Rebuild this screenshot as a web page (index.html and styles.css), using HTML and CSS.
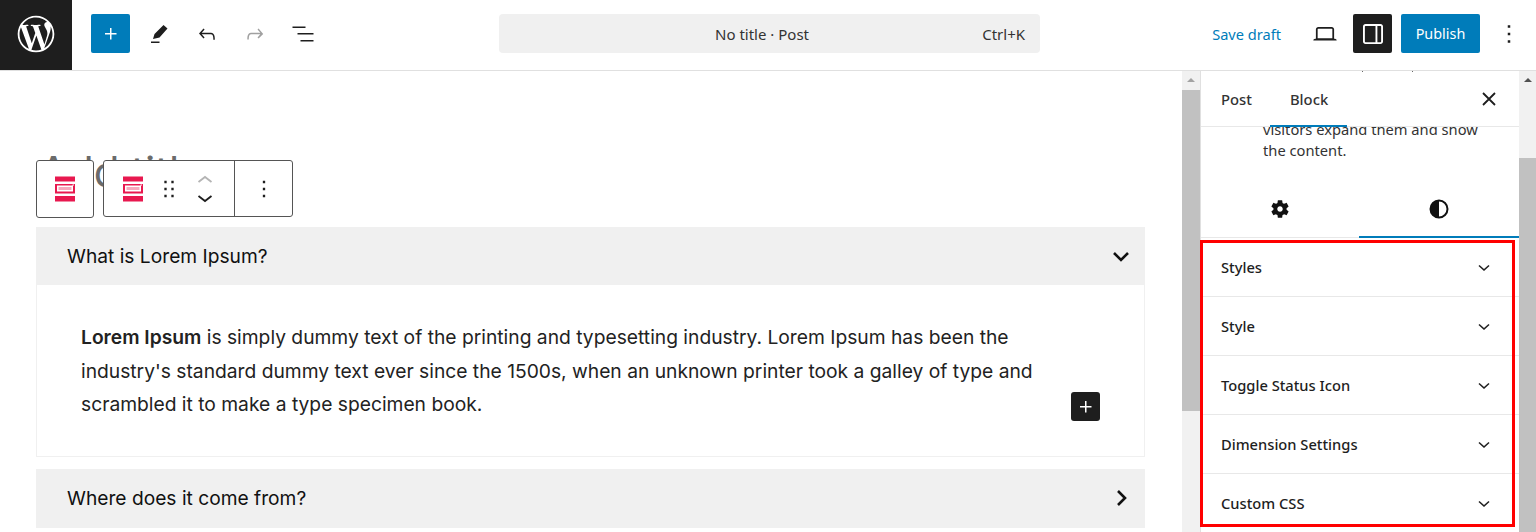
FILE: index.html
```html
<!DOCTYPE html>
<html lang="en">
<head>
    <meta charset="UTF-8">
    <title>Edit Post</title>
    <link rel="stylesheet" href="styles.css">
</head>
<body>
    <header class="topbar">
        <div class="wp-logo">
            <svg width="44" height="44" viewBox="0 0 24 24" fill="#fff"><path d="M12 2C6.500 2 2 6.500 2 12s4.500 10 10 10 10-4.500 10-10S17.500 2 12 2zM3 12c0-1.300.3-2.500.8-3.700l4.300 11.800C5 18.700 3 15.600 3 12zm9 9c-.9 0-1.700-.1-2.500-.4l2.700-7.800 2.700 7.600c0 0 0 .1.100.1-.9.300-1.900.5-3 .5zm1.200-13.200c.5 0 1-.1 1-.1.500-.1.400-.8-.1-.7 0 0-1.400.1-2.300.1-.8 0-2.300-.1-2.300-.1-.5 0-.5.700-.1.700 0 0 .5.100.9.100l1.300 3.700-1.900 5.600-3.100-9.300c.5 0 1-.1 1-.1.500-.1.400-.8-.1-.7 0 0-1.400.1-2.300.1h-.6C6.200 4.300 8.900 3 12 3c2.300 0 4.500.9 6.100 2.400h-.1c-.9 0-1.500.8-1.500 1.600 0 .7.400 1.300.9 2.100.4.600.8 1.400.8 2.600 0 .8-.3 1.700-.7 3l-.9 3-3.400-9.900zm3.300 12l2.800-7.900c.5-1.300.7-2.300.7-3.200 0-.3 0-.6-.1-.9.700 1.300 1.100 2.700 1.100 4.200 0 3.300-1.800 6.200-4.500 7.800z"/></svg>
        </div>
        <div class="tools">
            <button class="btn-add">
                <svg width="24" height="24" viewBox="0 0 24 24" fill="#fff"><path d="M11 12.500V17.500H12.500V12.500H17.500V11H12.500V6H11V11H6V12.500H11Z"/></svg>
            </button>
            <span class="tool">
                <svg width="24" height="24" viewBox="0 0 24 24" fill="#1e1e1e"><path d="M16.500 3L20.500 6.500 12.500 15.500 6 17 7.500 12zM4 19.500h8.500V21H4z"/></svg>
            </span>
            <span class="tool">
                <svg width="24" height="24" viewBox="0 0 24 24" fill="#1e1e1e"><path d="M18.300 11.700c-.6-.6-1.400-.9-2.300-.9H6.700l2.900-3.300-1.100-1-4.500 5L8.500 16.500l1.100-1-2.900-3.200H16c.5 0 .9.200 1.300.5 1 1 1 3.400 1 4.500v.5h1.500v-.5c0-1.500 0-4.300-1.500-5.600z"/></svg>
            </span>
            <span class="tool">
                <svg width="24" height="24" viewBox="0 0 24 24" fill="#a0a0a0"><path d="M15.600 6.500l-1.100 1 2.900 3.300H8c-.9 0-1.700.3-2.300.9-1.400 1.500-1.400 4.200-1.400 5.600v.2h1.500v-.3c0-1.100 0-3.500 1-4.500.3-.3.700-.5 1.300-.5h9.200L14.500 15.500l1.100 1.100 4.600-4.600-4.600-5.500z"/></svg>
            </span>
            <span class="tool">
                <svg width="24" height="24" viewBox="0 0 24 24" fill="#1e1e1e"><path d="M1.500 4.500h13V6h-13zM6.500 11h16v1.500h-16zM9.500 18h13v1.500h-13z"/></svg>
            </span>
        </div>
        <div class="command">
            <span class="command-title">No title · Post</span>
            <span class="command-key">Ctrl+K</span>
        </div>
        <div class="actions">
            <span class="save">Save draft</span>
            <svg class="laptop" width="28" height="28" viewBox="0 0 24 24" fill="#1e1e1e"><path d="M20.500 16h-.7V8c0-1.100-.9-2-2-2H6.200c-1.100 0-2 .9-2 2v8h-.7c-.8 0-1.500.7-1.500 1.500h20c0-.8-.7-1.500-1.500-1.500zM5.700 8c0-.3.200-.5.500-.5h11.600c.3 0 .5.200.5.500v7.600H5.700V8z"/></svg>
            <button class="btn-panel">
                <svg width="30" height="30" viewBox="0 0 24 24" fill="#fff"><path d="M18 4H6c-1.100 0-2 .9-2 2v12c0 1.100.9 2 2 2h12c1.100 0 2-.9 2-2V6c0-1.100-.9-2-2-2zM5.500 18V6c0-.3.200-.5.500-.5h8v13H6c-.3 0-.5-.2-.5-.5zm13 0c0 .3-.2.500-.5.500h-2.500v-13H18c.3 0 .5.200.5.500v12z"/></svg>
            </button>
            <button class="btn-publish">Publish</button>
            <svg class="kebab" width="30" height="30" viewBox="0 0 24 24" fill="#1e1e1e"><path d="M13 19h-2v-2h2v2zm0-6h-2v-2h2v2zm0-6h-2V5h2v2z"/></svg>
        </div>
    </header>

    <div class="workspace">
        <main class="editor">
            <div class="post-title">Add title</div>

            <div class="block-toolbar">
                <div class="tb-group tb-single">
                    <svg width="24" height="28" viewBox="0 0 24 28"><use href="#accordion"/></svg>
                </div>
                <div class="tb-group tb-main">
                    <div class="tb-cell">
                        <svg width="24" height="28" viewBox="0 0 24 28"><use href="#accordion"/></svg>
                        <svg width="28" height="28" viewBox="0 0 24 24" fill="#1e1e1e"><path d="M8 7h2V5H8v2zm0 6h2v-2H8v2zm0 6h2v-2H8v2zm6-14v2h2V5h-2zm0 8h2v-2h-2v2zm0 6h2v-2h-2v2z"/></svg>
                        <div class="movers">
                            <svg width="24" height="14" viewBox="0 0 24 14" fill="none" stroke="#b4b4b4" stroke-width="1.800"><path d="M5.500 10l6.500-5 6.500 5"/></svg>
                            <svg width="24" height="14" viewBox="0 0 24 14" fill="none" stroke="#1e1e1e" stroke-width="1.800"><path d="M5.500 4l6.500 5 6.500-5"/></svg>
                        </div>
                    </div>
                    <div class="tb-more">
                        <svg width="28" height="28" viewBox="0 0 24 24" fill="#1e1e1e"><path d="M13 19h-2v-2h2v2zm0-6h-2v-2h2v2zm0-6h-2V5h2v2z"/></svg>
                    </div>
                </div>
            </div>

            <section class="accordion">
                <div class="acc-head">
                    <span>What is Lorem Ipsum?</span>
                    <svg width="20" height="20" viewBox="0 0 20 20" fill="none" stroke="#111" stroke-width="2.600"><path d="M3 7l7 7 7-7"/></svg>
                </div>
                <div class="acc-body">
                    <p><strong>Lorem Ipsum</strong> is simply dummy text of the printing and typesetting industry. Lorem Ipsum has been the industry's standard dummy text ever since the 1500s, when an unknown printer took a galley of type and scrambled it to make a type specimen book.</p>
                    <span class="inserter">
                        <svg width="24" height="24" viewBox="0 0 24 24" fill="#fff"><path d="M11 12.500V17.500H12.500V12.500H17.500V11H12.500V6H11V11H6V12.500H11Z"/></svg>
                    </span>
                </div>
            </section>
            <section class="accordion">
                <div class="acc-head">
                    <span>Where does it come from?</span>
                    <svg class="chev-right" width="20" height="20" viewBox="0 0 20 20" fill="none" stroke="#111" stroke-width="2.600"><path d="M6 3l7 7-7 7"/></svg>
                </div>
            </section>
        </main>

        <div class="scrollbar scroll-editor"><i class="arrow"></i><i class="thumb"></i></div>

        <aside class="sidebar">
            <div class="clip-top"><i></i><i></i></div>
            <div class="side-tabs">
                <span class="side-tab">Post</span>
                <span class="side-tab is-active">Block</span>
                <svg class="side-close" width="24" height="24" viewBox="0 0 24 24" fill="none" stroke="#1e1e1e" stroke-width="1.800"><path d="M6 6l12 12M18 6L6 18"/></svg>
            </div>
            <div class="side-desc">
                <p>visitors expand them and show the content.</p>
            </div>
            <div class="inspector-tabs">
                <span class="insp-tab">
                    <svg width="22" height="22" viewBox="0 0 24 24" fill="#111"><path d="M19.140 12.940c.04-.3.06-.61.06-.94 0-.32-.02-.64-.07-.94l2.030-1.580c.18-.14.23-.41.12-.61l-1.920-3.320c-.12-.22-.37-.29-.59-.22l-2.390.96c-.5-.38-1.030-.7-1.620-.94l-.36-2.540c-.04-.24-.24-.41-.48-.41h-3.840c-.24 0-.43.17-.47.41l-.36 2.540c-.59.24-1.130.57-1.620.94l-2.390-.96c-.22-.08-.47 0-.59.22L2.740 8.870c-.12.21-.08.47.12.61l2.030 1.580c-.05.3-.09.63-.09.94s.02.64.07.94l-2.030 1.580c-.18.14-.23.41-.12.61l1.920 3.320c.12.22.37.29.59.22l2.390-.96c.5.38 1.030.7 1.620.94l.36 2.540c.05.24.24.41.48.41h3.840c.24 0 .44-.17.47-.41l.36-2.540c.59-.24 1.130-.56 1.620-.94l2.390.96c.22.08.47 0 .59-.22l1.920-3.320c.12-.22.07-.47-.12-.61l-2.010-1.580zM12 15c-1.650 0-3-1.350-3-3s1.350-3 3-3 3 1.350 3 3-1.350 3-3 3z"/></svg>
                </span>
                <span class="insp-tab is-active">
                    <svg width="24" height="24" viewBox="0 0 24 24" fill="#111"><path d="M12 2.500a9.500 9.500 0 100 19 9.500 9.500 0 000-19zm0 2v15a7.500 7.500 0 000-15z" fill-rule="evenodd"/></svg>
                </span>
            </div>
            <div class="panels">
                <div class="panel"><span>Styles</span><svg width="24" height="24" viewBox="0 0 24 24"><use href="#chev"/></svg></div>
                <div class="panel"><span>Style</span><svg width="24" height="24" viewBox="0 0 24 24"><use href="#chev"/></svg></div>
                <div class="panel"><span>Toggle Status Icon</span><svg width="24" height="24" viewBox="0 0 24 24"><use href="#chev"/></svg></div>
                <div class="panel"><span>Dimension Settings</span><svg width="24" height="24" viewBox="0 0 24 24"><use href="#chev"/></svg></div>
                <div class="panel"><span>Custom CSS</span><svg width="24" height="24" viewBox="0 0 24 24"><use href="#chev"/></svg></div>
            </div>
            <div class="highlight"></div>
        </aside>

        <div class="scrollbar scroll-side"><i class="arrow"></i><i class="thumb"></i></div>
    </div>

    <svg class="defs" width="0" height="0">
        <symbol id="accordion" viewBox="0 0 24 28">
            <path fill="#e8184f" d="M2 1.500h20v5H2zM2 21h20v5.500H2zM2 9h20v9.500H2z"/>
            <path fill="#fff" d="M4 10.500h16v6H4zM19.500 9.500h1.500v1h-1.500z"/>
            <path fill="#f7a8bd" d="M5.500 12h13v3h-13z"/>
        </symbol>
        <symbol id="chev" viewBox="0 0 24 24">
            <path fill="#1e1e1e" d="M17.500 11l-5.500 5-5.500-5 1-1.100 4.500 4 4.500-4z"/>
        </symbol>
    </svg>
</body>
</html>
```

FILE: styles.css
```css
* {
    box-sizing: border-box;
}
html, body {
    height: 532px;
    overflow: hidden;
}
body {
    margin: 0;
    font-family: "Noto Sans", sans-serif;
    color: #1e1e1e;
    background: #fff;
}
button {
    border: none;
    padding: 0;
    font-family: inherit;
    cursor: pointer;
}
svg {
    display: block;
    flex: none;
}
.defs {
    position: absolute;
}

/* top bar */
.topbar {
    height: 71px;
    display: flex;
    align-items: center;
    padding-bottom: 3px;
    border-bottom: 1px solid #e0e0e0;
}
.wp-logo {
    width: 72px;
    height: 70px;
    align-self: flex-start;
    padding-bottom: 3px;
    background: #1e1e1e;
    display: flex;
    align-items: center;
    justify-content: center;
    flex: none;
}
.tools {
    display: flex;
    align-items: center;
    margin-left: 19px;
    gap: 9px;
    flex: none;
}
.btn-add {
    width: 39px;
    height: 39px;
    border-radius: 2px;
    background: #007cba;
    display: flex;
    align-items: center;
    justify-content: center;
}
.tool {
    width: 39px;
    height: 39px;
    display: flex;
    align-items: center;
    justify-content: center;
}
.command {
    margin-left: 177px;
    width: 541px;
    height: 39px;
    padding: 0 15px 0 216px;
    flex: none;
    background: #f0f0f0;
    border-radius: 4px;
    display: flex;
    align-items: center;
    justify-content: space-between;
    font-size: 15px;
    color: #333;
}
.actions {
    margin-left: auto;
    display: flex;
    align-items: center;
}
.save {
    font-size: 14.600px;
    color: #007cba;
    margin-right: 30px;
}
.btn-panel {
    width: 39px;
    height: 39px;
    margin-left: 14px;
    border-radius: 2px;
    background: #1e1e1e;
    display: flex;
    align-items: center;
    justify-content: center;
}
.btn-publish {
    width: 79px;
    height: 39px;
    margin-left: 9px;
    border-radius: 2px;
    background: #007cba;
    color: #fff;
    font-size: 14.400px;
}
.kebab {
    margin: 0 12px 0 14px;
}

.workspace {
    display: flex;
    height: 461px;
}

/* editor canvas */
.editor {
    width: 1182px;
    position: relative;
    padding: 77px 37px 0 36px;
    overflow: hidden;
    font-family: Inter, sans-serif;
}
.post-title {
    height: 79px;
    font-size: 42px;
    line-height: 48px;
    color: #6b6b6b;
    padding-left: 3px;
}
.block-toolbar {
    position: absolute;
    left: 36px;
    top: 89px;
    display: flex;
    gap: 9px;
}
.tb-group {
    height: 58px;
    background: #fff;
    border: 1px solid #555;
    border-radius: 3px;
    display: flex;
    align-items: center;
}
.tb-single {
    width: 58px;
    justify-content: center;
}
.tb-main {
    height: 57px;
}
.tb-cell {
    width: 131px;
    height: 100%;
    padding-left: 17px;
    display: flex;
    align-items: center;
    gap: 10px;
    border-right: 1px solid #555;
}
.tb-more {
    width: 57px;
    display: flex;
    justify-content: center;
}
.movers {
    display: flex;
    flex-direction: column;
    gap: 6px;
}
.accordion {
    margin-bottom: 12px;
}
.acc-head {
    height: 58px;
    background: #f0f0f0;
    display: flex;
    align-items: center;
    justify-content: space-between;
    padding: 0 14px 1px 31px;
    font-size: 19.200px;
    color: #111;
}
.accordion + .accordion .acc-head {
    height: 59px;
}
.chev-right {
    margin-right: -1px;
}
.acc-body {
    position: relative;
    height: 172px;
    border: 1px solid #f0f0f0;
    border-top: none;
    padding: 36px 70px 0 44px;
}
.acc-body p {
    margin: 0;
    font-size: 19.240px;
    line-height: 33.500px;
    color: #222;
}
.acc-body strong {
    font-weight: 600;
}
.inserter {
    position: absolute;
    right: 44px;
    bottom: 35px;
    width: 29px;
    height: 29px;
    border-radius: 3px;
    background: #1e1e1e;
    display: flex;
    align-items: center;
    justify-content: center;
}

/* scrollbars */
.scrollbar {
    width: 18px;
    background: #f1f1f1;
    display: flex;
    flex-direction: column;
    flex: none;
}
.arrow {
    display: block;
    width: 8px;
    margin: 7px auto 0;
    border: 4px solid transparent;
    border-top: none;
    border-bottom: 4px solid #a3a3a3;
}
.thumb {
    display: block;
    margin-top: 8px;
    background: #c1c1c1;
}
.scroll-editor .thumb {
    height: 321px;
}
.scroll-side {
    width: 17px;
}
.scroll-side .arrow {
    border-bottom-color: #505050;
}
.scroll-side .thumb {
    margin-top: 76px;
    flex: 1;
}

/* sidebar */
.sidebar {
    width: 319px;
    position: relative;
    border-left: 1px solid #e0e0e0;
    font-size: 14.700px;
}
.clip-top {
    height: 2px;
    display: flex;
    gap: 49px;
    padding-left: 161px;
}
.clip-top i {
    width: 1px;
    height: 1px;
    background: #666;
}
.side-tabs {
    height: 54px;
    display: flex;
    align-items: center;
    padding: 0 18px 2px 20px;
    border-bottom: 1px solid #e8e8e8;
    font-size: 14.800px;
    position: relative;
}
.side-tab {
    font-weight: 500;
    color: #333;
    height: 100%;
    display: flex;
    align-items: center;
    position: relative;
}
.side-tab.is-active {
    margin-left: 38px;
}
.side-tab.is-active::after {
    content: "";
    position: absolute;
    left: -20px;
    right: -19px;
    bottom: -3px;
    height: 2px;
    background: #007cba;
}
.side-close {
    margin-left: auto;
}
.side-desc {
    height: 49px;
    overflow: hidden;
    padding: 0 30px 0 62px;
}
.side-desc p {
    margin: -8px 0 0;
    line-height: 21px;
    color: #333;
}
.inspector-tabs {
    height: 62px;
    display: flex;
    border-bottom: 1px solid #e8e8e8;
}
.insp-tab {
    width: 158px;
    padding-top: 5px;
    display: flex;
    align-items: center;
    justify-content: center;
    position: relative;
}
.insp-tab.is-active {
    width: 160px;
}
.insp-tab.is-active::after {
    content: "";
    position: absolute;
    left: 0;
    right: 0;
    bottom: -1px;
    height: 2px;
    background: #007cba;
}
.panel {
    height: 59px;
    display: flex;
    align-items: center;
    justify-content: space-between;
    padding: 0 23px 0 20px;
    border-bottom: 1px solid #e8e8e8;
    font-weight: 500;
}
.highlight {
    position: absolute;
    left: -1px;
    top: 169px;
    width: 315px;
    height: 287px;
    border: 3px solid #f00;
    pointer-events: none;
}
```
